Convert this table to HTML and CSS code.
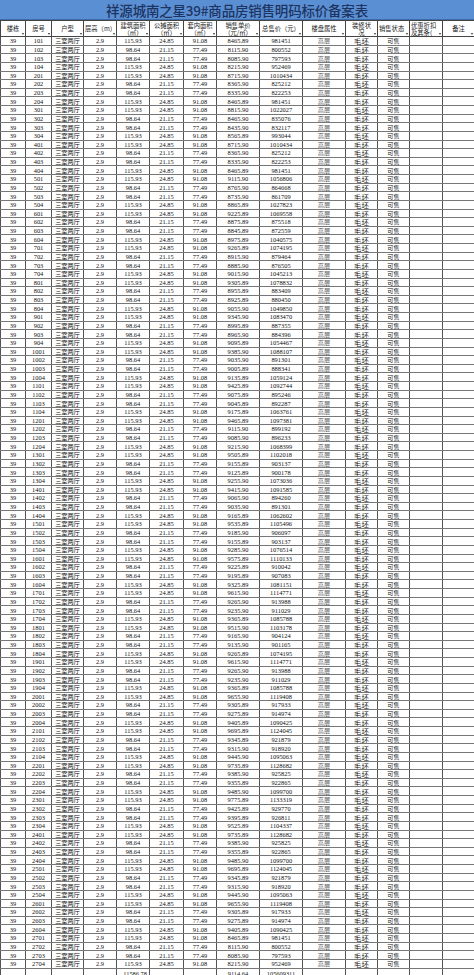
FILE: index.html
```html
<!DOCTYPE html>
<html lang="zh-CN">
<head>
<meta charset="utf-8">
<title>祥源城南之星39#商品房销售明码标价备案表</title>
<link rel="stylesheet" href="styles.css">
</head>
<body>
<div class="sheet">
  <div class="title">祥源城南之星39#商品房销售明码标价备案表</div>
  <table class="grid">
    <colgroup>
      <col class="w25"><col class="w26"><col class="w32"><col class="w33"><col class="w33"><col class="w34"><col class="w33">
      <col class="w43"><col class="w43"><col class="w43"><col class="w32"><col class="w32"><col class="w33"><col class="w32">
    </colgroup>
    <thead>
      <tr>
        <th>楼栋<span class="flt"></span></th>
        <th>房号<span class="flt"></span></th>
        <th>户型<span class="flt"></span></th>
        <th class="left">层高（m）<span class="flt"></span></th>
        <th>建筑面积<br>（㎡）<span class="flt"></span></th>
        <th>公摊面积<br>（㎡）<span class="flt"></span></th>
        <th>套内面积<br>（㎡）<span class="flt"></span></th>
        <th>销售单价<br>（元/㎡）<span class="flt"></span></th>
        <th>总售价（元）<span class="flt"></span></th>
        <th>楼盘属性<span class="flt"></span></th>
        <th>装修状<br>况<span class="flt"></span></th>
        <th class="left">销售状态<span class="flt"></span></th>
        <th class="left">优惠折扣<br>及其条(<span class="flt"></span></th>
        <th>备注<span class="flt"></span></th>
      </tr>
    </thead>
    <tbody id="rows"></tbody>
    <tfoot>
      <tr>
        <td></td><td></td><td></td><td></td><td class="right">11586.78</td><td></td><td></td>
        <td>9114.64</td><td>105609311</td><td></td><td></td><td></td><td></td><td></td>
      </tr>
    </tfoot>
  </table>
</div>
<script src="script.js"></script>
</body>
</html>
```

FILE: styles.css
```css
html, body {
  margin: 0;
  padding: 0;
  background: #ffffff;
}
.sheet {
  width: 474px;
  overflow: hidden;
  font-family: "Liberation Serif", "Noto Sans CJK SC", serif;
  color: #111;
}
.title {
  height: 20px;
  line-height: 20px;
  background: #5b8fd4;
  color: #1d3461;
  font-family: "Noto Sans CJK SC", sans-serif;
  font-size: 13.5px;
  font-weight: 500;
  text-align: center;
  letter-spacing: -0.2px;
  border-bottom: 1px solid #3d6aa8;
  box-sizing: border-box;
}
.grid {
  width: 474px;
  table-layout: fixed;
  border-collapse: collapse;
}
.w25 { width: 25px; }
.w26 { width: 26px; }
.w32 { width: 32px; }
.w33 { width: 33px; }
.w34 { width: 34px; }
.w43 { width: 43px; }
.grid th {
  position: relative;
  height: 15px;
  padding: 0;
  font-family: "Noto Sans CJK SC", sans-serif;
  font-weight: 400;
  font-size: 6.3px;
  line-height: 7px;
  text-align: center;
  border: 1px solid #444;
  color: #222;
  vertical-align: middle;
  overflow: hidden;
  white-space: nowrap;
}
.grid th.left { text-align: left; padding-left: 1px; }
.flt {
  position: absolute;
  right: 1px;
  bottom: 1px;
  width: 0;
  height: 0;
  border-left: 1.5px solid transparent;
  border-right: 1.5px solid transparent;
  border-top: 2px solid #333;
}
.grid td {
  height: 7.63px;
  padding: 0;
  font-size: 6.4px;
  line-height: 7px;
  text-align: center;
  border: 1px solid #555;
  border-top-color: #777;
  border-bottom-color: #777;
  white-space: nowrap;
  overflow: hidden;
  vertical-align: middle;
}
.grid td.cjk {
  font-family: "Noto Sans CJK SC", sans-serif;
  font-size: 6.2px;
}
.grid td.attr {
  font-family: "Noto Sans CJK SC", sans-serif;
  font-size: 6.2px;
  color: #555;
}
.grid td.deco {
  font-family: "Noto Sans CJK SC", sans-serif;
  font-size: 7.4px;
}
.grid td.right {
  text-align: right;
  padding-right: 2px;
}
.grid tfoot td {
  height: 9px;
  border-bottom: none;
}
```

FILE: script.js
```js
(function () {
  var data = [
    "8465.89 981451","8115.90 800552","8085.90 797593","8215.90 952469",
    "8715.90 1010434","8365.90 825212","8335.90 822253","8465.89 981451",
    "8815.90 1022027","8465.90 835076","8435.90 832117","8565.89 993044",
    "8715.90 1010434","8365.90 825212","8335.90 822253","8465.89 981451",
    "9115.90 1056806","8765.90 864668","8735.90 861709","8865.89 1027823",
    "9225.89 1069558","8875.89 875518","8845.89 872559","8975.89 1040575",
    "9265.89 1074195","8915.90 879464","8885.90 876505","9015.90 1045213",
    "9305.89 1078832","8955.89 883409","8925.89 880450","9055.90 1049850",
    "9345.90 1083470","8995.89 887355","8965.90 884396","9095.89 1054467",
    "9385.90 1088107","9035.90 891301","9005.89 888341","9135.89 1059124",
    "9425.89 1092744","9075.89 895246","9045.89 892287","9175.89 1063761",
    "9465.89 1097381","9115.90 899192","9085.90 896233","9215.90 1068399",
    "9505.89 1102018","9155.89 903137","9125.89 900178","9255.90 1073036",
    "9415.90 1091585","9065.90 894260","9035.90 891301","9165.89 1062602",
    "9535.89 1105496","9185.90 906097","9155.89 903137","9285.90 1076514",
    "9575.89 1110133","9225.89 910042","9195.89 907083","9325.89 1081151",
    "9615.90 1114771","9265.90 913988","9235.90 911029","9365.89 1085788",
    "9515.90 1103178","9165.90 904124","9135.90 901165","9265.89 1074195",
    "9615.90 1114771","9265.90 913988","9235.90 911029","9365.89 1085788",
    "9655.90 1119408","9305.89 917933","9275.89 914974","9405.89 1090425",
    "9695.89 1124045","9345.89 921879","9315.90 918920","9445.90 1095063",
    "9735.89 1128682","9385.90 925825","9355.89 922865","9485.90 1099700",
    "9775.89 1133319","9425.89 929770","9395.89 926811","9525.89 1104337",
    "9735.89 1128682","9385.90 925825","9355.89 922865","9485.90 1099700",
    "9695.89 1124045","9345.89 921879","9315.90 918920","9445.90 1095063",
    "9655.90 1119408","9305.89 917933","9275.89 914974","9405.89 1090425",
    "8465.89 981451","8115.90 800552","8085.90 797593","8215.90 952469"
  ];
  var big = ["115.93", "24.85", "91.08"];
  var small = ["98.64", "21.15", "77.49"];
  var html = "";
  for (var i = 0; i < data.length; i++) {
    var floor = Math.floor(i / 4) + 1;
    var unit = (i % 4) + 1;
    var room = String(floor) + "0" + unit;
    var areas = (unit === 1 || unit === 4) ? big : small;
    var p = data[i].split(" ");
    html += "<tr>" +
      "<td>39</td>" +
      "<td>" + room + "</td>" +
      "<td class=\"cjk\">三室两厅</td>" +
      "<td>2.9</td>" +
      "<td>" + areas[0] + "</td>" +
      "<td>" + areas[1] + "</td>" +
      "<td>" + areas[2] + "</td>" +
      "<td>" + p[0] + "</td>" +
      "<td>" + p[1] + "</td>" +
      "<td class=\"attr\">高层</td>" +
      "<td class=\"deco\">毛坯</td>" +
      "<td class=\"cjk\">可售</td>" +
      "<td></td><td></td>" +
      "</tr>";
  }
  document.getElementById("rows").innerHTML = html;
})();
```
